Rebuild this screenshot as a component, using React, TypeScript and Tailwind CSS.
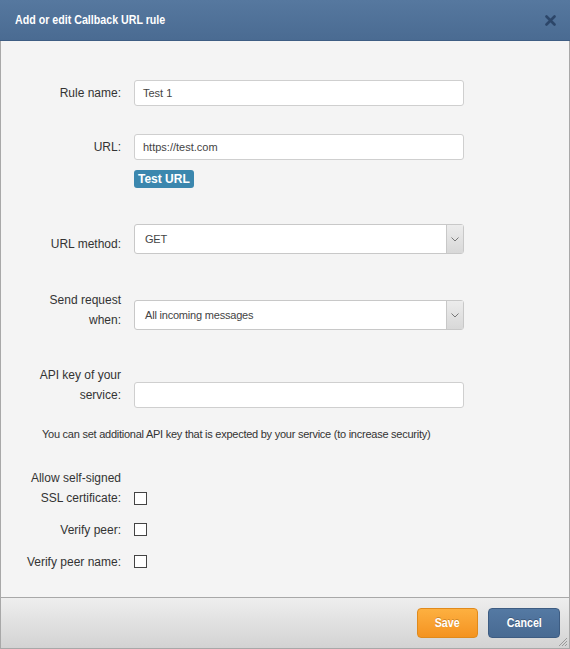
import { ReactNode } from 'react';

// Narrow bold text (Arial Narrow look) — no narrow font installed, so squeeze horizontally
function Narrow({ children, className = '' }: { children: ReactNode; className?: string }) {
  return <span className={`inline-block scale-x-[0.82] ${className}`}>{children}</span>;
}

function Row({ label, children, align = 'items-center', className = '' }: { label: ReactNode; children: ReactNode; align?: string; className?: string }) {
  return (
    <div className={`flex ${align} ${className}`}>
      <div className="w-[96px] shrink-0 text-right text-[12px] leading-[20px] text-[#333]">{label}</div>
      <div className="ml-[13px] flex-1">{children}</div>
    </div>
  );
}

function TextInput({ value = '' }: { value?: string }) {
  return (
    <div className="h-[26px] w-[330px] rounded-[3px] border border-[#cfcfcf] bg-white pl-[8px] text-[11px] leading-[24px] text-[#444]">
      {value}
    </div>
  );
}

function Select({ value }: { value: string }) {
  return (
    <div className="flex h-[30px] w-[330px] rounded-[3px] border border-[#c8c8c8] bg-white">
      <div className="flex-1 pl-[10px] text-[11px] leading-[28px] tracking-[-0.2px] text-[#444]">{value}</div>
      <div className="flex w-[17px] items-center justify-center border-l border-[#c8c8c8] bg-gradient-to-b from-[#ececec] to-[#d8d8d8]">
        <svg width="8" height="5" viewBox="0 0 8 5">
          <path d="M0.5 0.5 L4 4 L7.5 0.5" fill="none" stroke="#777" strokeWidth="1" />
        </svg>
      </div>
    </div>
  );
}

function Checkbox() {
  return <div className="h-[13px] w-[13px] border border-[#444] bg-white" />;
}

export default function App() {
  return (
    <div
      className="flex h-[649px] w-[570px] flex-col overflow-hidden"
      style={{ fontFamily: '"Liberation Sans", Arial, sans-serif' }}
    >
      {/* Title bar */}
      <div className="flex h-[41px] shrink-0 items-center justify-between border-b border-[#3e5d83] bg-gradient-to-b from-[#56789f] to-[#4a6b92] pl-[15px] pr-[14px]">
        <Narrow className="origin-left text-[13px] font-bold text-white">Add or edit Callback URL rule</Narrow>
        <svg width="11" height="11" viewBox="0 0 11 11">
          <path d="M1.5 1.5 L9.5 9.5 M9.5 1.5 L1.5 9.5" stroke="#2c4669" strokeWidth="2.6" strokeLinecap="round" />
        </svg>
      </div>

      {/* Body */}
      <div className="flex-1 border-x border-[#a8a8a8] bg-[#f4f4f4] pl-[24px] pt-[39px]">
        <Row label="Rule name:">
          <TextInput value="Test 1" />
        </Row>

        <Row label="URL:" className="mt-[28px]">
          <TextInput value="https://test.com" />
        </Row>
        <div className="ml-[109px] mt-[10px] flex">
          <div className="h-[18px] rounded-[3px] bg-[#3b87ae] px-[4px] text-[12px] font-bold leading-[18px] text-white">
            Test URL
          </div>
        </div>

        <Row label="URL method:" align="items-end" className="mt-[36px]">
          <Select value="GET" />
        </Row>

        <Row label={<>Send request<br />when:</>} align="items-end" className="mt-[36px]">
          <Select value="All incoming messages" />
        </Row>

        <Row label={<>API key of your<br />service:</>} align="items-end" className="mt-[35px]">
          <div className="mb-[-3px]">
            <TextInput />
          </div>
        </Row>

        <p className="ml-[17px] mt-[21px] text-[11px] tracking-[-0.25px] text-[#333]">
          You can set additional API key that is expected by your service (to increase security)
        </p>

        <Row label={<>Allow self-signed<br />SSL certificate:</>} align="items-end" className="mt-[25px]">
          <div className="mb-[3px]">
            <Checkbox />
          </div>
        </Row>

        <Row label="Verify peer:" className="mt-[12px]">
          <Checkbox />
        </Row>

        <Row label="Verify peer name:" className="mt-[12px]">
          <Checkbox />
        </Row>
      </div>

      {/* Footer */}
      <div className="relative flex h-[52px] shrink-0 items-center justify-end gap-[10px] border border-[#a8a8a8] bg-gradient-to-b from-[#eeeeee] to-[#d3d3d3] pr-[9px]">
        <button className="h-[30px] w-[61px] rounded-[4px] border border-[#e08a1c] bg-gradient-to-b from-[#fdb040] to-[#f4931f] text-[13px] font-bold text-white [text-shadow:0_-1px_0_rgba(0,0,0,0.2)]">
          <Narrow>Save</Narrow>
        </button>
        <button className="h-[30px] w-[72px] rounded-[4px] border border-[#3d5c82] bg-gradient-to-b from-[#5479a3] to-[#486a92] text-[13px] font-bold text-white [text-shadow:0_-1px_0_rgba(0,0,0,0.25)]">
          <Narrow>Cancel</Narrow>
        </button>
        <svg className="absolute bottom-[1px] right-[1px]" width="12" height="12" viewBox="0 0 12 12">
          <path d="M11 3 L3 11 M11 6 L6 11 M11 9 L9 11" stroke="#9a9a9a" strokeWidth="1" />
        </svg>
      </div>
    </div>
  );
}
